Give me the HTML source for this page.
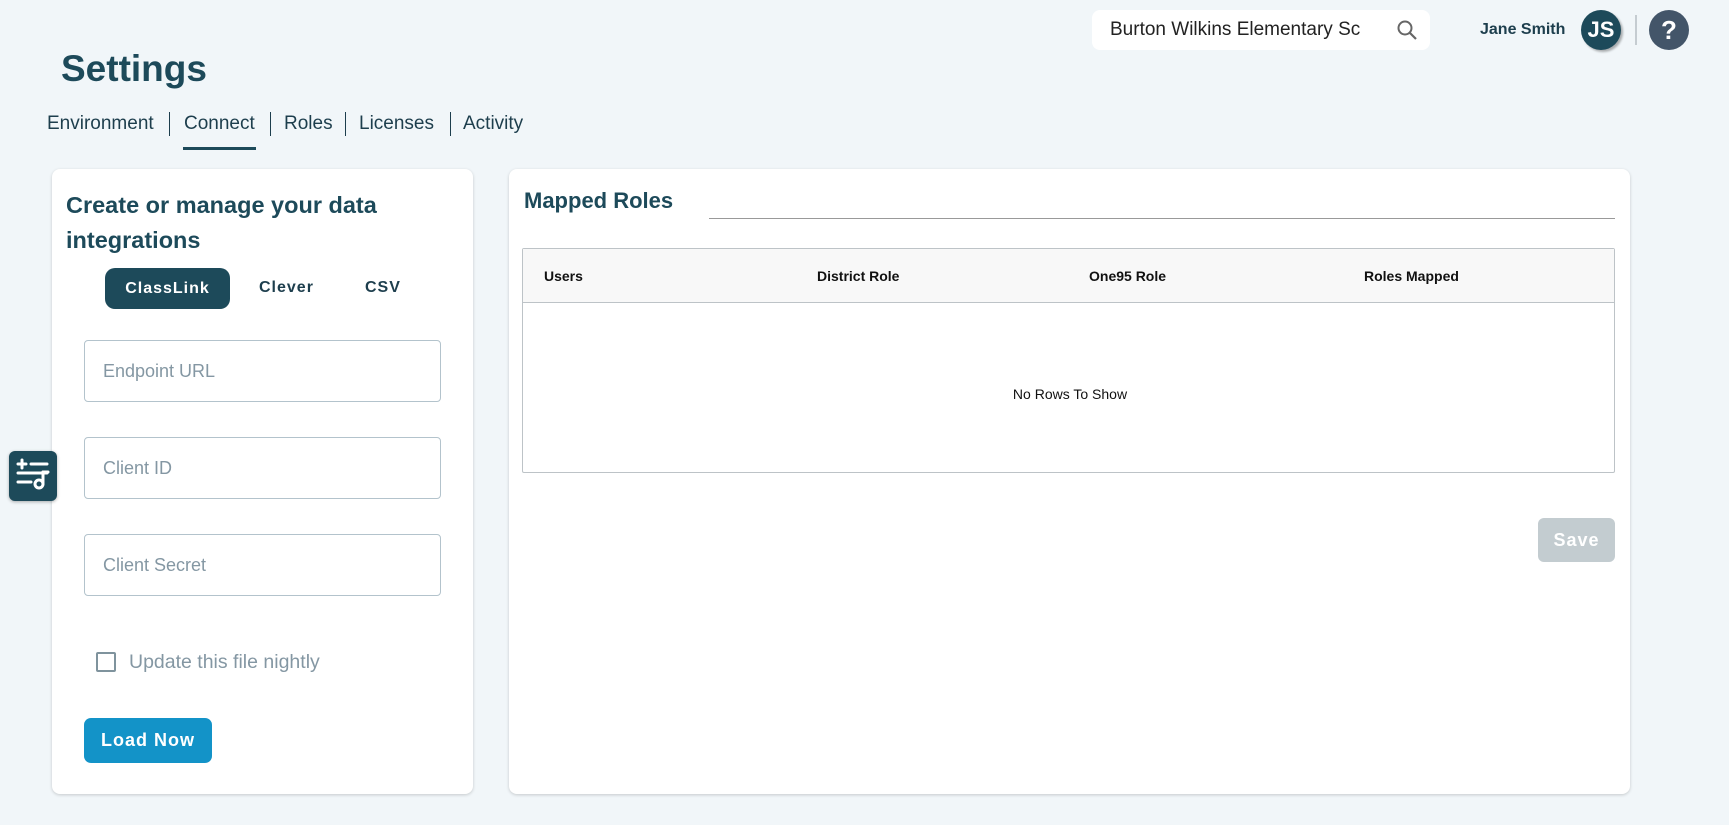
<!DOCTYPE html>
<html><head><meta charset="utf-8"><style>
*{box-sizing:border-box;margin:0;padding:0}
body{width:1729px;height:825px;background:#f1f6f9;font-family:"Liberation Sans",sans-serif;position:relative;overflow:hidden;color:#1d4a5a}
.abs{position:absolute}
.search{left:1092px;top:10px;width:338px;height:40px;background:#fff;border-radius:8px;font-size:19px;color:#222;padding:9px 0 0 18px}
.card{background:#fff;border-radius:8px;box-shadow:0 1px 3px rgba(0,0,0,.18)}
.tab{top:113px;font-size:19px;color:#1d3e4d}
.div{top:112px;width:1px;height:24px;background:#1d3e4d}
.inp{left:84px;width:357px;height:62px;border:1px solid #b3c3cc;border-radius:4px;font-size:18px;color:#8497a3;padding:20px 0 0 18px}
.th{top:268px;font-size:14px;font-weight:bold;color:#111}
</style></head><body>
<div class="abs search">Burton Wilkins Elementary Sc
<svg class="abs" style="left:304px;top:9px" width="22" height="22" viewBox="0 0 22 22"><circle cx="9" cy="9" r="6.5" fill="none" stroke="#666" stroke-width="2"/><line x1="14" y1="14" x2="20" y2="20" stroke="#666" stroke-width="2.2"/></svg></div>
<div class="abs" style="left:1480px;top:21px;font-size:16px;font-weight:bold;color:#1d3e4d">Jane Smith</div>
<div class="abs" style="left:1581px;top:10px;width:40px;height:40px;border-radius:50%;background:#1d4a5a;color:#fff;font-size:22px;font-weight:bold;text-align:center;line-height:40px;box-shadow:2px 2px 2px rgba(0,0,0,.3)">JS</div>
<div class="abs" style="left:1635px;top:15px;width:2px;height:30px;background:#c5ccd1"></div>
<div class="abs" style="left:1649px;top:10px;width:40px;height:40px;border-radius:50%;background:#435569;color:#fff;font-size:26px;font-weight:bold;text-align:center;line-height:40px">?</div>
<div class="abs" style="left:61px;top:48px;font-size:37px;font-weight:bold;color:#1d4a5a">Settings</div>
<div class="abs tab" style="left:47px">Environment</div><div class="abs div" style="left:169px"></div>
<div class="abs tab" style="left:184px">Connect</div><div class="abs div" style="left:270px"></div>
<div class="abs tab" style="left:284px">Roles</div><div class="abs div" style="left:345px"></div>
<div class="abs tab" style="left:359px">Licenses</div><div class="abs div" style="left:450px"></div>
<div class="abs tab" style="left:463px">Activity</div>
<div class="abs" style="left:183px;top:147px;width:73px;height:3px;background:#1d4a5a"></div>

<div class="abs card" style="left:52px;top:169px;width:421px;height:625px"></div>
<div class="abs" style="left:66px;top:188px;font-size:23.5px;font-weight:bold;line-height:35px;color:#1d4a5a">Create or manage your data<br>integrations</div>
<div class="abs" style="left:105px;top:268px;width:125px;height:41px;border-radius:10px;background:#1d4a5a;color:#fff;font-size:16px;font-weight:bold;letter-spacing:1px;text-align:center;line-height:41px">ClassLink</div>
<div class="abs" style="left:259px;top:279px;font-size:16px;font-weight:bold;letter-spacing:1px;color:#1d3e4d">Clever</div>
<div class="abs" style="left:365px;top:279px;font-size:16px;font-weight:bold;letter-spacing:1px;color:#1d3e4d">CSV</div>
<div class="abs inp" style="top:340px">Endpoint URL</div>
<div class="abs inp" style="top:437px">Client ID</div>
<div class="abs inp" style="top:534px">Client Secret</div>
<div class="abs" style="left:96px;top:652px;width:20px;height:20px;border:2px solid #7f939d;border-radius:2px"></div>
<div class="abs" style="left:129px;top:651px;font-size:19.5px;color:#8497a3">Update this file nightly</div>
<div class="abs" style="left:84px;top:718px;width:128px;height:45px;border-radius:7px;background:#1393c8;color:#fff;font-size:18px;font-weight:bold;letter-spacing:1px;text-align:center;line-height:45px">Load Now</div>

<div class="abs" style="left:9px;top:451px;width:48px;height:50px;border-radius:6px;background:#1d4a5a;box-shadow:0 1px 3px rgba(0,0,0,.3)">
<svg width="48" height="50" viewBox="0 0 48 50" fill="none" stroke="#fff" stroke-width="3" stroke-linecap="round"><line x1="9" y1="13" x2="17" y2="13"/><line x1="13" y1="9" x2="13" y2="17"/><line x1="22" y1="13" x2="38" y2="13"/><line x1="9" y1="22" x2="38" y2="22"/><line x1="9" y1="31" x2="22" y2="31"/><circle cx="30" cy="33" r="4"/><path d="M34 33V21"/><path d="M34 21h5"/></svg></div>

<div class="abs card" style="left:509px;top:169px;width:1121px;height:625px"></div>
<div class="abs" style="left:524px;top:188px;font-size:22px;font-weight:bold;color:#1d4a5a">Mapped Roles</div>
<div class="abs" style="left:709px;top:218px;width:906px;height:1px;background:#999"></div>
<div class="abs" style="left:522px;top:248px;width:1093px;height:225px;border:1px solid #bdc3c7;border-radius:2px"></div>
<div class="abs" style="left:523px;top:249px;width:1091px;height:54px;background:#f8f8f8;border-bottom:1px solid #bdc3c7"></div>
<div class="abs th" style="left:544px">Users</div>
<div class="abs th" style="left:817px">District Role</div>
<div class="abs th" style="left:1089px">One95 Role</div>
<div class="abs th" style="left:1364px">Roles Mapped</div>
<div class="abs" style="left:970px;top:386px;width:200px;text-align:center;font-size:14px;color:#111">No Rows To Show</div>
<div class="abs" style="left:1538px;top:518px;width:77px;height:44px;border-radius:6px;background:#c3ccd0;color:#fff;font-size:18px;font-weight:bold;text-align:center;line-height:44px;letter-spacing:1px">Save</div>
</body></html>
